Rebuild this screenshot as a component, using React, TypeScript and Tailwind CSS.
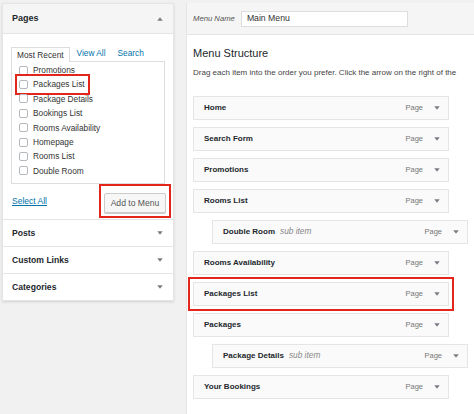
import { FC } from "react";

const pages = [
	"Promotions",
	"Packages List",
	"Package Details",
	"Bookings List",
	"Rooms Availability",
	"Homepage",
	"Rooms List",
	"Double Room",
];

const menuItems: { label: string; sub?: boolean; marked?: boolean }[] = [
	{ label: "Home" },
	{ label: "Search Form" },
	{ label: "Promotions" },
	{ label: "Rooms List" },
	{ label: "Double Room", sub: true },
	{ label: "Rooms Availability" },
	{ label: "Packages List", marked: true },
	{ label: "Packages" },
	{ label: "Package Details", sub: true },
	{ label: "Your Bookings" },
];

const Caret: FC<{ up?: boolean }> = ({ up }) => (
	<svg width="6" height="4" viewBox="0 0 6 4" className={up ? "rotate-180" : ""}>
		<path d="M0.3 0.3 L5.7 0.3 L3 3.8 Z" fill="#787c82" />
	</svg>
);

const Section: FC<{ title: string }> = ({ title }) => (
	<div className="h-[27px] border-t border-[#e5e5e5] flex items-center justify-between pl-[9px] pr-[10px]">
		<span className="text-[8.6px] font-bold text-[#23282d]">{title}</span>
		<Caret />
	</div>
);

export default function App() {
	return (
		<div
			className="w-[474px] h-[414px] bg-[#f1f1f1] flex pt-[3px] overflow-hidden"
			style={{ fontFamily: "'Liberation Sans', Arial, sans-serif" }}
		>
			{/* Left column */}
			<div className="ml-[2px] w-[172px] shrink-0">
				<div className="bg-white border border-[#e5e5e5] shadow-sm">
					<div className="h-[30px] bg-[#f5f5f5] border-b border-[#e5e5e5] flex items-center justify-between pl-[9px] pr-[10px]">
						<span className="text-[9px] font-bold text-[#23282d]">Pages</span>
						<Caret up />
					</div>
					<div className="px-[8px] pt-[12px] pb-[6px]">
						<div className="flex items-end text-[8.3px] h-[15px]">
							<div className="h-[15px] px-[5px] border border-b-0 border-[#ddd] bg-white text-[#333] flex items-center relative top-[1px]">
								Most Recent
							</div>
							<span className="ml-[7px] text-[#0073aa] leading-[15px]">View All</span>
							<span className="ml-[12px] text-[#0073aa] leading-[15px]">Search</span>
						</div>
						<div className="border border-[#ddd] h-[123px] pt-[1px] pl-[7px]">
							{pages.map((p) => (
								<div key={p} className="h-[14.4px] flex items-center">
									<div
										className={
											p === "Packages List"
												? "flex items-center outline-2 outline-[#e3261c] outline-offset-[2px] pr-[1px]"
												: "flex items-center"
										}
									>
										<span className="w-[9px] h-[9px] border border-[#b4b9be] rounded-[2px] bg-white" />
										<span className="ml-[5px] text-[8.3px] text-[#333]">{p}</span>
									</div>
								</div>
							))}
						</div>
						<div className="flex items-center justify-between mt-[5px]">
							<span className="text-[8.5px] text-[#0073aa] underline ml-[1px]">Select All</span>
							<div className="outline-2 outline-[#e3261c] outline-offset-[3px] mr-[-1px]">
								<button className="h-[20px] w-[62px] text-[8.6px] text-[#555] bg-[#f7f7f7] border border-[#ccc] rounded-[2px] shadow-[0_1px_0_#ccc]">
									Add to Menu
								</button>
							</div>
						</div>
					</div>
					<Section title="Posts" />
					<Section title="Custom Links" />
					<Section title="Categories" />
				</div>
			</div>

			{/* Right panel */}
			<div className="ml-[12px] flex-1 bg-white border-l border-[#e5e5e5] flex flex-col min-w-0">
				<div className="h-[32px] bg-[#f5f5f5] border-b border-[#e5e5e5] flex items-center pl-[6px] shrink-0">
					<span className="text-[7.7px] italic text-[#555]">Menu Name</span>
					<div className="ml-[6px] w-[167px] h-[16px] bg-white border border-[#ddd] flex items-center pl-[5px] text-[8.7px] text-[#333]">
						Main Menu
					</div>
				</div>
				<div className="pl-[6px] pt-[10px]">
					<div className="text-[11px] font-medium text-[#23282d]">Menu Structure</div>
					<div className="mt-[5px] text-[8px] text-[#444] whitespace-nowrap overflow-hidden">
						Drag each item into the order you prefer. Click the arrow on the right of the
					</div>
					<div className="mt-[17px] flex flex-col gap-[7px]">
						{menuItems.map((m) => (
							<div
								key={m.label}
								className={`h-[24px] w-[256px] bg-[#fafafa] border border-[#e5e5e5] flex items-center pl-[10px] pr-[8px] ${
									m.sub ? "ml-[19px]" : ""
								} ${m.marked ? "outline-2 outline-[#e3261c] outline-offset-[3px]" : ""}`}
							>
								<span className="text-[8px] font-bold text-[#23282d]">{m.label}</span>
								{m.sub && <span className="ml-[5px] text-[8.3px] italic text-[#888]">sub item</span>}
								<span className="ml-auto text-[7.5px] text-[#777]">Page</span>
								<span className="ml-[11px] flex">
									<Caret />
								</span>
							</div>
						))}
					</div>
				</div>
			</div>
		</div>
	);
}
